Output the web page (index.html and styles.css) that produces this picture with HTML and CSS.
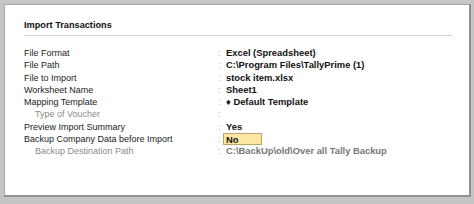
FILE: index.html
```html
<!DOCTYPE html>
<html>
<head>
    <title>Import Transactions</title>
    <meta charset="utf-8">
    <link rel="stylesheet" href="styles.css">
</head>
<body>
    <div class="panel">
        <div class="head">Import Transactions</div>
        <div class="rows">
            <div class="row"><span class="lbl">File Format</span><span class="col">:</span><span class="val">Excel (Spreadsheet)</span></div>
            <div class="row"><span class="lbl">File Path</span><span class="col">:</span><span class="val">C:\Program Files\TallyPrime (1)</span></div>
            <div class="row"><span class="lbl">File to Import</span><span class="col">:</span><span class="val">stock item.xlsx</span></div>
            <div class="row"><span class="lbl">Worksheet Name</span><span class="col">:</span><span class="val">Sheet1</span></div>
            <div class="row"><span class="lbl">Mapping Template</span><span class="col">:</span><span class="val">&#9830; Default Template</span></div>
            <div class="row sub"><span class="lbl">Type of Voucher</span><span class="col">:</span><span class="val"></span></div>
            <div class="row"><span class="lbl">Preview Import Summary</span><span class="col">:</span><span class="val">Yes</span></div>
            <div class="row"><span class="lbl">Backup Company Data before Import</span><span class="col">:</span><span class="val"><span class="edit">No</span></span></div>
            <div class="row sub"><span class="lbl">Backup Destination Path</span><span class="col">:</span><span class="val">C:\BackUp\old\Over all Tally Backup</span></div>
        </div>
    </div>
</body>
</html>
```

FILE: styles.css
```css
* {
    margin: 0;
    padding: 0;
    box-sizing: border-box;
}

html,
body {
    height: 100%;
}

body {
    background: #c3c5c7;
    font-family: "Liberation Sans", Arial, sans-serif;
    color: #1a1a1a;
    padding: 4px 3px 7px 4px;
}

.panel {
    background: #fff;
    height: 193px;
    border-top: 1px solid #a4a6a8;
    border-left: 1px solid #a4a6a8;
    border-right: 2px solid #8e9092;
    border-bottom: 2px solid #8e9092;
    padding: 14px 16px 0 19px;
}

.head {
    font-size: 9.2px;
    font-weight: bold;
    line-height: 12px;
    padding-bottom: 4px;
    border-bottom: 1px solid #d0d0d0;
    color: #111;
}

.rows {
    padding-top: 11px;
}

.row {
    display: grid;
    grid-template-columns: 194px 8px 1fr;
    align-items: center;
    height: 12.25px;
    line-height: 12px;
}

.lbl {
    font-size: 9px;
    color: #222;
    white-space: nowrap;
}

.col {
    font-size: 9px;
    color: #aaa;
}

.val {
    font-size: 9.4px;
    font-weight: bold;
    color: #111;
    white-space: nowrap;
}

.row.sub .lbl {
    padding-left: 11px;
    color: #8a8a8a;
}

.row.sub .val {
    color: #777;
}

.edit {
    display: inline-block;
    width: 39px;
    height: 12px;
    line-height: 11px;
    margin-left: -3px;
    padding-left: 2px;
    background: #fce6a2;
    border: 1px solid #b9a46a;
}
```
